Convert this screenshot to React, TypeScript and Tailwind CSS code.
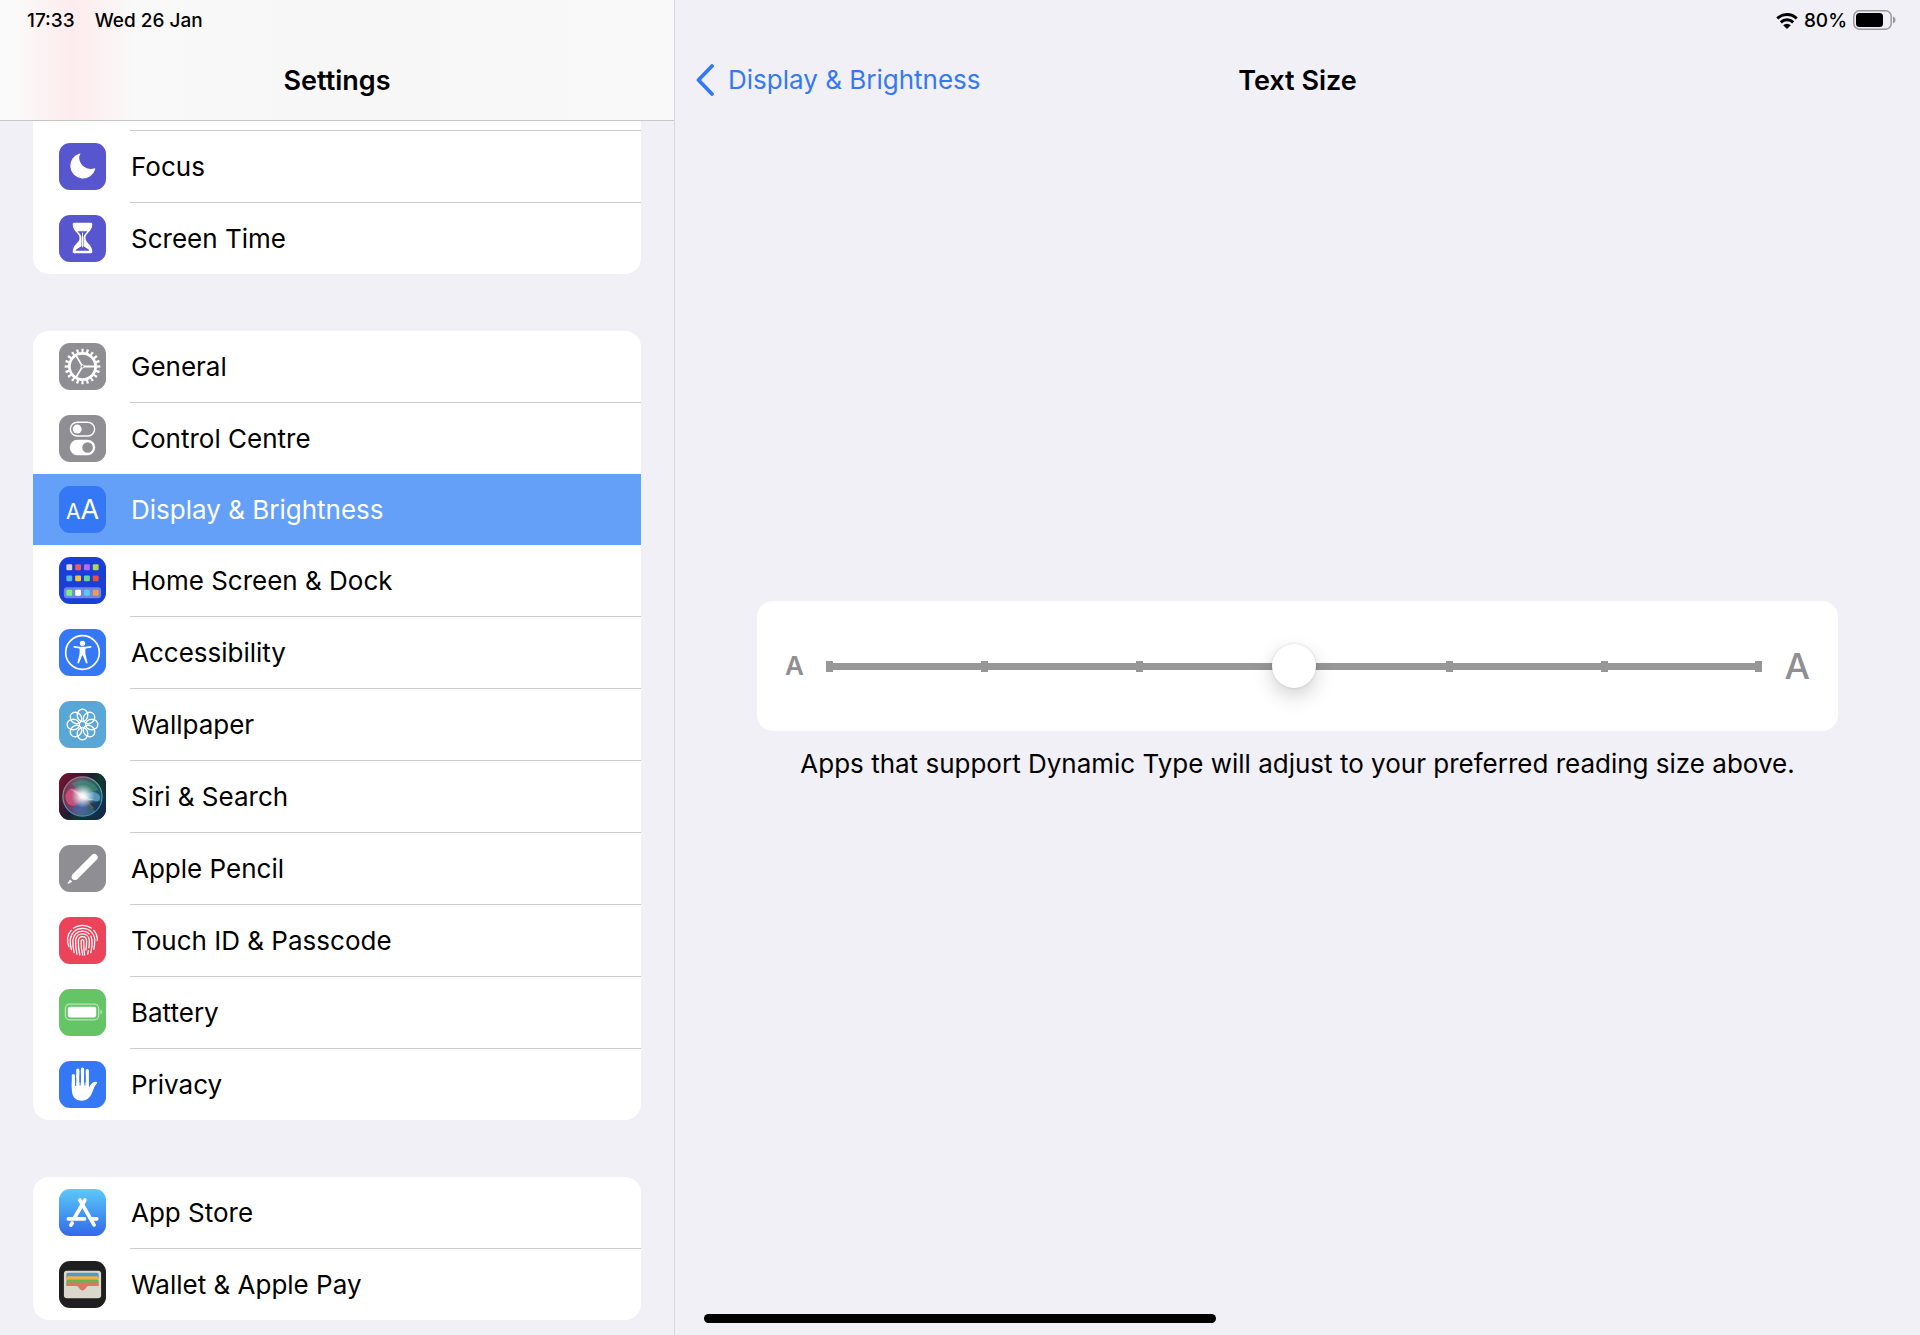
import { useState } from 'react';
import type { ReactNode } from 'react';
import clsx from 'clsx';

type SettingsItem = {
  label: string;
  icon: ReactNode;
  tile: string;
};

const Glyph = ({ children }: { children: ReactNode }) => (
  <svg viewBox="0 0 48 48" className="size-full" fill="none" aria-hidden="true">
    {children}
  </svg>
);

const MoonIcon = () => (
  <Glyph>
    <path
      d="M21.4 10.6A13 13 0 1 0 37 26.8c.2-.8-.4-1.1-1-.8A12 12 0 0 1 20.7 16c-.3-1.7 0-3 .9-4.6.4-.6.3-1-.2-.8Z"
      fill="#fff"
    />
  </Glyph>
);

const HourglassIcon = () => (
  <Glyph>
    <path
      d="M15.5 8h17c1.2 0 1.6.8 1.5 2-.3 7-7 8.5-7 13.5s6.7 6.5 7 13.5c.1 1.2-.3 2-1.5 2h-17c-1.2 0-1.6-.8-1.5-2 .3-7 7-8.5 7-13.5S14.3 17 14 10c-.1-1.2.3-2 1.5-2Z"
      fill="#fff"
    />
    <path d="M19 16.5h10c-1.5 2.300-4 3.700-4 7v8c0 1.500 5 2.500 6 5H17c1-2.500 6-3.500 6-5v-8c0-3.300-2.500-4.700-4-7Z" fill="#5856ce" />
    <path d="M24 18v15" stroke="#fff" strokeWidth="1" />
  </Glyph>
);

const GearIcon = () => (
  <Glyph>
    <circle cx="24" cy="24" r="16.2" stroke="#fff" strokeWidth="4" pathLength="120" strokeDasharray="2.600 3.400" strokeDashoffset="1.300" />
    <circle cx="24" cy="24" r="13.4" stroke="#fff" strokeWidth="2.8" />
    <path d="M25.500 24H37M23.200 22.600 17.500 13M23.200 25.400 17.500 35" stroke="#fff" strokeWidth="1.800" />
    <circle cx="24" cy="24" r="1.600" stroke="#fff" strokeWidth="1" />
  </Glyph>
);

const TogglesIcon = () => (
  <Glyph>
    <rect x="11.600" y="7.400" width="24.800" height="14" rx="7" stroke="#fff" strokeWidth="1.400" />
    <circle cx="18.600" cy="14.400" r="4.600" fill="#fff" />
    <rect x="11" y="25.400" width="26" height="15.600" rx="7.800" fill="#fff" />
    <circle cx="29.200" cy="33.200" r="5.400" fill="#8e8e93" />
  </Glyph>
);

const TextSizeIcon = () => (
  <span className="flex items-baseline leading-none text-white">
    <span className="text-[21px] leading-none">A</span>
    <span className="text-[27px] leading-none">A</span>
  </span>
);

const homeDots = [
  ['#d8d8d0', '#ef5b62', '#b26cf2', '#b4d44c'],
  ['#57b8f5', '#f8c040', '#67d59b', '#e8503c'],
  ['#7ff080', '#ffffff', '#5cc8fa', '#f59a48'],
];

const HomeScreenIcon = () => (
  <Glyph>
    <rect x="5" y="31" width="38" height="11" rx="3" fill="#6f86e4" />
    {homeDots.map((row, y) =>
      row.map((color, x) => (
        <rect key={color} x={7.5 + x * 9} y={[7.5, 18.8, 33.5][y]} width="6" height="6" rx="1.2" fill={color} />
      ))
    )}
  </Glyph>
);

const AccessibilityIcon = () => (
  <Glyph>
    <circle cx="24" cy="24" r="17.2" stroke="#fff" strokeWidth="1.7" />
    <circle cx="24" cy="14.6" r="2.7" fill="#fff" />
    <path
      d="M15.5 17.4c-1 0-1.200 1.500 0 1.700l5.300.9c.4 1.500.5 4.500-.2 7l-1.700 7c-.3 1.400 1.300 1.700 1.700.5L23.600 27h.8l3 7.500c.5 1.200 2 .9 1.700-.5l-1.700-7c-.7-2.500-.6-5.500-.2-7l5.300-.9c1.200-.2 1-1.700 0-1.700l-5.500.6h-6l-5.500-.6Z"
      fill="#fff"
    />
  </Glyph>
);

const FlowerIcon = () => (
  <Glyph>
    {[0, 45, 90, 135, 180, 225, 270, 315].map((angle) => (
      <ellipse key={angle} cx="24" cy="14.6" rx="5.4" ry="6.3" stroke="#fff" strokeWidth="1.4" transform={`rotate(${angle} 24 24)`} />
    ))}
  </Glyph>
);

const SiriIcon = () => (
  <Glyph>
    <defs>
      <linearGradient id="siri-bg" x1="0" y1="0.2" x2="1" y2="0.8">
        <stop offset="0" stopColor="#74142f" />
        <stop offset="0.45" stopColor="#1c1d33" />
        <stop offset="0.6" stopColor="#12372f" />
        <stop offset="1" stopColor="#132a4c" />
      </linearGradient>
      <linearGradient id="siri-orb" x1="0" y1="0.5" x2="1" y2="0.5">
        <stop offset="0" stopColor="#a02c58" />
        <stop offset="0.45" stopColor="#6b7590" />
        <stop offset="1" stopColor="#1d6470" />
      </linearGradient>
      <linearGradient id="siri-ring" x1="0" y1="0" x2="0.3" y2="1">
        <stop offset="0" stopColor="#c05a78" />
        <stop offset="0.4" stopColor="#5fae93" />
        <stop offset="1" stopColor="#3f8fd6" />
      </linearGradient>
      <radialGradient id="siri-glow">
        <stop offset="0" stopColor="#fff" />
        <stop offset="0.3" stopColor="#fff" stopOpacity="0.8" />
        <stop offset="1" stopColor="#d8f0ff" stopOpacity="0" />
      </radialGradient>
    </defs>
    <rect width="48" height="48" fill="url(#siri-bg)" />
    <circle cx="24" cy="24" r="20" fill="url(#siri-orb)" fillOpacity="0.75" stroke="url(#siri-ring)" strokeWidth="1.2" />
    <path d="M13 11C20 5 34 6 40 17c-5 2-10 4-15 7-4-5-8-9-12-13Z" fill="#3f9a78" fillOpacity="0.55" />
    <ellipse cx="15" cy="24.5" rx="8.5" ry="9" fill="#ec5a88" fillOpacity="0.65" />
    <ellipse cx="34.5" cy="25" rx="7.5" ry="5.5" fill="#6fb4e6" fillOpacity="0.65" />
    <path d="M24 26C18 31 15 34 13 37c5 4 11 5 16 4-1-6-2-11-5-15Z" fill="#3a62c8" fillOpacity="0.5" />
    <path d="m25 25 12 14c3-3 5-7 6-10-6 0-12-1-18-4Z" fill="#0c2440" fillOpacity="0.55" />
    <path d="m26 26 9 10" stroke="#d0587c" strokeWidth="0.8" />
    <circle cx="24.5" cy="23.5" r="12" fill="url(#siri-glow)" />
    <path d="M11 16c7 2 12 4 17 8 2 2 5 3 8 3-5 2-10 1-13-1-4-3-7-7-12-10Z" fill="#fff" fillOpacity="0.4" />
  </Glyph>
);

const PencilIcon = () => (
  <Glyph>
    <path d="m36 12.7-19.300 19.300" stroke="#fff" strokeWidth="7" strokeLinecap="round" />
    <path d="m14.500 29.200 5.200 5.200-4 1.200c-1.500.3-3.200-1.400-2.800-2.800Z" fill="#fff" />
    <path d="m11.300 35.300 2.300 2.300-4 1.900c-.6.200-.9-.1-.7-.6Z" fill="#fff" />
  </Glyph>
);

const FingerprintIcon = () => (
  <Glyph>
    <g stroke="#fff" strokeWidth="1.3" strokeLinecap="round">
      <path d="M15 11.300c5-3.600 13-3.600 18 0" />
      <path d="M12.400 13.600c-4 4.500-4.500 10.500-2.300 16.700" />
      <path d="M35.600 13.600c2.600 2.900 3.700 6.400 3.500 10.400" />
      <path d="M12.700 33.500c-1-3.500-1.500-6.500-1.200-10.500.6-6.500 5.800-11.300 12.500-11.300 7.200 0 12.500 5.300 12.500 12 0 3.300-.2 6.300-1 9.300" />
      <path d="M15.500 36.500c-1-4-1.600-8-1.300-12.500.4-5.500 4.500-9.500 9.800-9.500 2.700 0 5 1 6.800 2.600M32.600 19.300c1.500 3.400 1.500 9.700-.1 17" />
      <path d="M18.400 38c-1.200-5-1.700-9.500-1.400-14 .3-4 3.200-6.700 7-6.700 4.200 0 7 3 7 7.200 0 2.500-.1 4.500-.5 7M30 34.300l-.7 3.500" />
      <path d="M21.300 38.800c-1.300-5.500-1.800-10-1.500-14.500.2-2.500 1.900-4.200 4.200-4.200 2.600 0 4.200 2 4.200 4.800 0 3.500-.2 6-.7 8.600" />
      <path d="M24.200 39c-1.200-5-1.700-9.500-1.600-14 0-2.400 2.800-2.400 2.800.2 0 4.500-.1 8.600.8 13.600" />
    </g>
  </Glyph>
);

const BatteryTileIcon = () => (
  <Glyph>
    <rect x="6.5" y="15.5" width="34" height="16" rx="4.5" stroke="#b9e6b9" strokeWidth="1.3" />
    <rect x="9" y="18" width="29" height="11" rx="2.2" fill="#fff" />
    <path d="M42.300 21v5c1-.4 1.600-1.300 1.600-2.500s-.6-2.100-1.600-2.500Z" fill="#b9e6b9" />
  </Glyph>
);

const HandIcon = () => (
  <Glyph>
    <g stroke="#fff" strokeWidth="3.3" strokeLinecap="round">
      <path d="M14.700 14.800V27M19.200 9.400V27M24 8.200V27M28.900 9.900V27" />
    </g>
    <path
      d="M13.050 22h17.500v5.500c1.300-2.600 2.400-4.400 4-5.500 1.300-.9 3-.9 4.300-.2.300.2.200.6-.1.900-2.600 2.500-3.300 5.800-4.700 9.300-2 5.200-5.300 8.500-10.500 8.500-7 0-10.500-4.500-10.500-12Z"
      fill="#fff"
    />
    <path d="M16.950 16v9M21.600 14v10.500M26.450 14v10.500" stroke="#3478f6" strokeWidth="1.1" strokeLinecap="round" />
  </Glyph>
);

const AppStoreIcon = () => (
  <Glyph>
    <g stroke="#fff" strokeWidth="3.8" strokeLinecap="round">
      <path d="M9.500 30.500h16.500M33.500 30.500h5" />
      <path d="m26.500 11.300-11 18.500M13.500 34.800l-1.300 2.100" />
      <path d="m21.300 11.300 14.500 25.300" />
    </g>
  </Glyph>
);

const WalletIcon = () => (
  <Glyph>
    <rect x="5" y="10" width="38" height="28" rx="3" fill="#dad8cd" />
    <path d="M7.500 14a2 2 0 0 1 2-2h29a2 2 0 0 1 2 2v4h-33Z" fill="#5597c8" />
    <path d="M7.500 17.500a2 2 0 0 1 2-2h29a2 2 0 0 1 2 2v4h-33Z" fill="#f0b43c" />
    <path d="M7.500 21a2 2 0 0 1 2-2h29a2 2 0 0 1 2 2v4h-33Z" fill="#69b452" />
    <path d="M7.500 24a2 2 0 0 1 2-2h29a2 2 0 0 1 2 2v1.500h-10c-1.500 0-2.200.8-3 2-1 1.600-2.200 2.500-3.500 2.500s-2.500-.9-3.500-2.500c-.8-1.200-1.500-2-3-2h-10Z" fill="#e27462" />
  </Glyph>
);

const groups: SettingsItem[][] = [
  [
    { label: 'Focus', icon: <MoonIcon />, tile: 'bg-[#5856ce]' },
    { label: 'Screen Time', icon: <HourglassIcon />, tile: 'bg-[#5856ce]' },
  ],
  [
    { label: 'General', icon: <GearIcon />, tile: 'bg-[#8e8e93]' },
    { label: 'Control Centre', icon: <TogglesIcon />, tile: 'bg-[#8e8e93]' },
    { label: 'Display & Brightness', icon: <TextSizeIcon />, tile: 'bg-[#3478f6]' },
    { label: 'Home Screen & Dock', icon: <HomeScreenIcon />, tile: 'bg-[#193fd6]' },
    { label: 'Accessibility', icon: <AccessibilityIcon />, tile: 'bg-[#3478f6]' },
    { label: 'Wallpaper', icon: <FlowerIcon />, tile: 'bg-[#59a7d7]' },
    { label: 'Siri & Search', icon: <SiriIcon />, tile: 'bg-[#1c1d33]' },
    { label: 'Apple Pencil', icon: <PencilIcon />, tile: 'bg-[#8e8e93]' },
    { label: 'Touch ID & Passcode', icon: <FingerprintIcon />, tile: 'bg-[#eb445a]' },
    { label: 'Battery', icon: <BatteryTileIcon />, tile: 'bg-[#65c466]' },
    { label: 'Privacy', icon: <HandIcon />, tile: 'bg-[#3478f6]' },
  ],
  [
    { label: 'App Store', icon: <AppStoreIcon />, tile: 'bg-linear-to-b from-[#5ec8f8] to-[#3468e8]' },
    { label: 'Wallet & Apple Pay', icon: <WalletIcon />, tile: 'bg-[#1f1f1f]' },
  ],
];

const selected = 'Display & Brightness';

const SettingsRow = ({ item, divider }: { item: SettingsItem; divider: boolean }) => {
  const isSelected = item.label === selected;

  return (
    <li>
      <a
        href="#"
        aria-current={isSelected ? 'page' : undefined}
        className={clsx('flex h-[71px] items-center gap-[25px] pl-[26px]', isSelected && 'bg-[#649ff8] text-white')}
      >
        <span className={clsx('flex size-[47px] shrink-0 items-center justify-center overflow-hidden rounded-[11px]', item.tile)}>
          {item.icon}
        </span>
        <span>{item.label}</span>
      </a>
      {divider && <div className="ml-[97px] h-px bg-[#cacacd]" />}
    </li>
  );
};

const Sidebar = () => (
  <aside className="border-r border-[#d8d8dc]">
    <header className="h-[121px] border-b border-[#c8c8cb] bg-linear-to-r from-[#fbfafa] via-[#f7f7f7] via-50% to-[#f9f9f9]">
      <div className="flex h-full flex-col bg-linear-to-r from-transparent from-2% via-[#fdeced] via-11% to-transparent to-20%">
        <div className="flex h-10 items-center gap-5 pl-[27px] text-[19px] font-medium">
          <time>17:33</time>
          <span>Wed 26 Jan</span>
        </div>
        <h1 className="flex h-20 items-center justify-center text-[27px] font-semibold">Settings</h1>
      </div>
    </header>

    <nav aria-label="Settings" className="flex flex-col gap-[57px] px-[33px] pb-4">
      {groups.map((group, index) => (
        <ul key={group[0].label} className={clsx('overflow-hidden bg-white', index === 0 ? 'rounded-b-2xl' : 'rounded-2xl')}>
          {/* bottom edge of the row scrolled under the header */}
          {index === 0 && <li aria-hidden="true" className="ml-[97px] h-[10px] border-b border-[#cacacd]" />}
          {group.map((item, i) => (
            <SettingsRow
              key={item.label}
              item={item}
              divider={i < group.length - 1 && item.label !== selected && group[i + 1].label !== selected}
            />
          ))}
        </ul>
      ))}
    </nav>
  </aside>
);

const StatusIcons = () => (
  <div className="flex h-10 items-center justify-end gap-[6px] pr-6 text-[19px] font-medium">
    <svg viewBox="0 0 22 17" className="h-[17px] w-[22px]" aria-label="Wi-Fi">
      <path d="M11 17 7.200 13.200a5.400 5.400 0 0 1 7.600 0Z" fill="#000" />
      <path d="M4.800 10.300a9 9 0 0 1 12.400 0M1.300 6.500a14 14 0 0 1 19.400 0" stroke="#000" strokeWidth="3" fill="none" />
    </svg>
    <span>80%</span>
    <svg viewBox="0 0 43 20" className="h-5 w-[43px]" aria-label="Battery">
      <rect x="0.8" y="0.8" width="37.4" height="18.4" rx="5.5" stroke="#98989c" strokeWidth="1.5" fill="none" />
      <rect x="3" y="3" width="27" height="14" rx="3.5" fill="#000" />
      <path d="M40 6.500v7c1.500-.6 2.500-1.900 2.500-3.500s-1-2.900-2.500-3.500Z" fill="#98989c" />
    </svg>
  </div>
);

const TextSizeSlider = () => {
  const [size, setSize] = useState(3);

  return (
    <div className="flex h-[130px] items-center gap-[22px] rounded-2xl bg-white px-7">
      <span className="text-[26px] font-semibold text-[#8e8e93]">A</span>
      <div className="relative flex h-11 flex-1 items-center">
        <div className="flex h-[7px] w-full items-center justify-between bg-[#979797]">
          {[0, 1, 2, 3, 4, 5, 6].map((step) => (
            <span key={step} className="h-[11px] w-[7px] bg-[#979797]" />
          ))}
        </div>
        <input
          type="range"
          aria-label="Text size"
          min={0}
          max={6}
          step={1}
          value={size}
          onChange={(e) => setSize(Number(e.target.value))}
          className="absolute inset-y-0 -left-5 h-11 w-[calc(100%+40px)] cursor-pointer appearance-none bg-transparent outline-none [&::-webkit-slider-thumb]:size-11 [&::-webkit-slider-thumb]:appearance-none [&::-webkit-slider-thumb]:rounded-full [&::-webkit-slider-thumb]:bg-white [&::-webkit-slider-thumb]:shadow-[0_8px_20px_rgba(0,0,0,0.18),0_0_3px_rgba(0,0,0,0.15)]"
        />
      </div>
      <span className="text-4xl font-medium text-[#8e8e93]">A</span>
    </div>
  );
};

const App = () => (
  <div className="relative grid min-h-screen grid-cols-[35%_1fr] bg-[#f1f0f6] font-['Inter','Liberation_Sans',sans-serif] text-[26px] leading-none text-black min-[1900px]:grid-cols-[675px_1fr]">
    <Sidebar />

    <main>
      <StatusIcons />
      <div className="grid h-20 grid-cols-[1fr_auto_1fr] items-center">
        <a href="#" className="flex items-center gap-[14px] pl-[21px] text-[#3478f6]">
          <svg viewBox="0 0 18 32" className="h-8 w-[18px]" fill="none" aria-hidden="true">
            <path d="M16 2 2.500 16 16 30" stroke="#3478f6" strokeWidth="3.8" strokeLinecap="round" strokeLinejoin="round" />
          </svg>
          Display & Brightness
        </a>
        <h2 className="text-[27px] font-semibold">Text Size</h2>
      </div>

      <section className="px-[82px] pt-[481px]">
        <TextSizeSlider />
        <p className="pt-5 text-center">Apps that support Dynamic Type will adjust to your preferred reading size above.</p>
      </section>
    </main>

    <div className="absolute bottom-[13px] left-1/2 h-[9px] w-[512px] -translate-x-1/2 rounded-full bg-black" />
  </div>
);

export default App;
